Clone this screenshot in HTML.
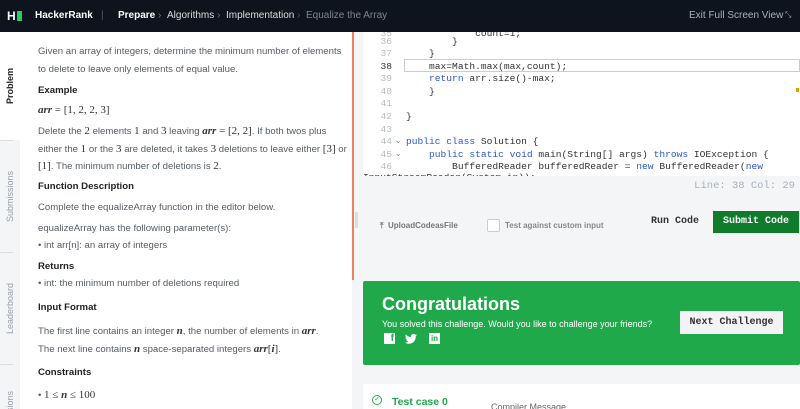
<!DOCTYPE html>
<html><head><style>
*{margin:0;padding:0;box-sizing:border-box}
html,body{width:800px;height:409px;overflow:hidden}
body{background:#f3f5f7;font-family:"Liberation Sans",sans-serif;position:relative}
.top{position:absolute;left:0;top:0;width:800px;height:32px;background:#0e141e;color:#fff;font-size:10px}
.top span{position:absolute;top:10px}
.side{position:absolute;left:0;top:32px;width:20px;height:377px;background:#f3f5f7}
.tab{position:absolute;left:0;width:20px;font-size:9px;color:#9aa0a8;writing-mode:vertical-rl;transform:rotate(180deg);display:flex;align-items:center;justify-content:center}
.left{position:absolute;left:20px;top:32px;width:332px;height:377px;background:#fff;color:#555c66;font-size:9.6px}
.left p{position:absolute;left:18px;white-space:nowrap}
.left b{color:#222;font-weight:bold}
.m{font-family:"Liberation Serif",serif;font-size:11px;color:#333}
.mi{font-family:"Liberation Serif",serif;font-style:italic;font-weight:bold;font-size:11px;color:#333}
.ed{position:absolute;left:363px;top:32px;width:437px;height:166px;background:#fff;font-family:"Liberation Mono",monospace;font-size:9.6px;overflow:hidden}
.ln{position:absolute;left:0;width:29px;text-align:right;color:#b6bcc4}
.cv{position:absolute;left:32px;color:#888;font-size:8px}
.cd{position:absolute;left:43px;white-space:pre;color:#333}
.kw{color:#2b57d6}
</style></head><body>
<div class="top">
<div style="position:absolute;left:7px;top:9px;font-weight:bold;font-size:12px">H<span style="position:static;display:inline-block;width:5px;height:10px;background:#2ec866;margin-left:1px;vertical-align:-1px"></span></div>
<span style="left:35px;font-weight:bold">HackerRank</span>
<span style="left:101px;color:#555">|</span>
<span style="left:118px;font-weight:bold">Prepare</span>
<span style="left:158px;color:#777">›</span>
<span style="left:167px;color:#ddd">Algorithms</span>
<span style="left:217px;color:#777">›</span>
<span style="left:226px;color:#ddd">Implementation</span>
<span style="left:297px;color:#555">›</span>
<span style="left:306px;color:#7b8592">Equalize the Array</span>
<span style="left:689px;color:#a8b0ba">Exit Full Screen View</span>
<span style="left:785px;color:#aaa;font-size:8px">⤡</span>
</div>
<div class="side">
<div class="tab" style="top:0;height:108px;background:#fff;color:#222;font-weight:bold">Problem</div>
<div style="position:absolute;top:108px;left:0;width:14px;height:1px;background:#ddd"></div>
<div class="tab" style="top:109px;height:110px">Submissions</div>
<div style="position:absolute;top:220px;left:0;width:14px;height:1px;background:#ddd"></div>
<div class="tab" style="top:221px;height:110px">Leaderboard</div>
<div style="position:absolute;top:332px;left:0;width:14px;height:1px;background:#ddd"></div>
<div class="tab" style="top:333px;height:100px">Discussions</div>
</div>
<div class="left">
<p style="top:14px">Given an array of integers, determine the minimum number of elements</p>
<p style="top:32px">to delete to leave only elements of equal value.</p>
<p style="top:53px"><b>Example</b></p>
<p style="top:72px"><span class="mi">arr</span> <span class="m">= [1, 2, 2, 3]</span></p>
<p style="top:93px">Delete the <span class="m">2</span> elements <span class="m">1</span> and <span class="m">3</span> leaving <span class="mi">arr</span> <span class="m">= [2, 2]</span>. If both twos plus</p>
<p style="top:111px">either the <span class="m">1</span> or the <span class="m">3</span> are deleted, it takes <span class="m">3</span> deletions to leave either <span class="m">[3]</span> or</p>
<p style="top:128px"><span class="m">[1]</span>. The minimum number of deletions is <span class="m">2</span>.</p>
<p style="top:149px"><b>Function Description</b></p>
<p style="top:170px">Complete the equalizeArray function in the editor below.</p>
<p style="top:191px">equalizeArray has the following parameter(s):</p>
<p style="top:208px">• int arr[n]: an array of integers</p>
<p style="top:229px"><b>Returns</b></p>
<p style="top:246px">• int: the minimum number of deletions required</p>
<p style="top:270px"><b>Input Format</b></p>
<p style="top:293px">The first line contains an integer <span class="mi">n</span>, the number of elements in <span class="mi">arr</span>.</p>
<p style="top:311px">The next line contains <span class="mi">n</span> space-separated integers <span class="mi">arr</span><span class="m">[</span><span class="mi">i</span><span class="m">]</span>.</p>
<p style="top:335px"><b>Constraints</b></p>
<p style="top:357px">• <span class="m">1 ≤ </span><span class="mi">n</span><span class="m"> ≤ 100</span></p>
</div>
<div style="position:absolute;left:352px;top:32px;width:2px;height:248px;background:#f0815a"></div>
<div style="position:absolute;left:355px;top:212px;width:3px;height:16px;background:#ddd"></div>
<div class="ed">
<div style="position:absolute;left:0;top:0;width:437px;height:144px">
<div style="position:absolute;left:41px;top:27px;width:396px;height:13px;border:1px solid #ccc"></div>
<div class="ln" style="top:-4px">35</div><div class="cd" style="top:-4px">            count=1;</div>
<div class="ln" style="top:4px">36</div><div class="cd" style="top:4px">        }</div>
<div class="ln" style="top:16px">37</div><div class="cd" style="top:16px">    }</div>
<div class="ln" style="top:29px;color:#333">38</div><div class="cd" style="top:29px">    max=Math.max(max,count);</div>
<div class="ln" style="top:41px">39</div><div class="cd" style="top:41px">    <span class="kw">return</span> arr.size()-max;</div>
<div class="ln" style="top:54px">40</div><div class="cd" style="top:54px">    }</div>
<div class="ln" style="top:66px">41</div>
<div class="ln" style="top:79px">42</div><div class="cd" style="top:79px">}</div>
<div class="ln" style="top:92px">43</div>
<div class="ln" style="top:104px">44</div><div class="cv" style="top:104px">⌄</div><div class="cd" style="top:104px"><span class="kw">public class</span> Solution {</div>
<div class="ln" style="top:117px">45</div><div class="cv" style="top:117px">⌄</div><div class="cd" style="top:117px">    <span class="kw">public static void</span> main(String[] args) <span class="kw">throws</span> IOException {</div>
<div class="ln" style="top:129px">46</div><div class="cd" style="top:129px">        BufferedReader bufferedReader = <span class="kw">new</span> BufferedReader(<span class="kw">new</span></div>
<div class="cd" style="top:140px;left:0">InputStreamReader(System.in));</div>
</div>
<div style="position:absolute;left:0;top:144px;width:437px;height:22px;background:#f3f5f7;color:#aab0b8;font-size:10.5px;text-align:right;padding:4px 5px 0 0">Line: 38 Col: 29</div>
<div style="position:absolute;left:433px;top:56px;width:3px;height:4px;background:#e0a000"></div>
</div>
<div style="position:absolute;left:380px;top:221px;font-size:8px;color:#777;font-weight:bold">⤒ &nbsp;UploadCodeasFile</div>
<div style="position:absolute;left:487px;top:219px;width:13px;height:13px;border:1px solid #ccc;border-radius:2px;background:#fff"></div>
<div style="position:absolute;left:505px;top:221px;font-size:8px;color:#888;font-weight:bold">Test against custom input</div>
<div style="position:absolute;left:651px;top:216px;font-family:'Liberation Mono',monospace;font-weight:bold;font-size:10px;color:#333">Run Code</div>
<div style="position:absolute;left:713px;top:211px;width:86px;height:22px;background:#0f7c2b;color:#fff;font-family:'Liberation Mono',monospace;font-weight:bold;font-size:10px;text-align:center;line-height:22px">Submit Code</div>
<div style="position:absolute;left:363px;top:281px;width:437px;height:84px;background:#20a94b;border-radius:2px;color:#fff">
<div style="position:absolute;left:19px;top:13px;font-size:18px;font-weight:bold">Congratulations</div>
<div style="position:absolute;left:19px;top:38px;font-size:9px">You solved this challenge. Would you like to challenge your friends?</div>
<div style="position:absolute;left:21px;top:52px;width:11px;height:11px;background:#fff;color:#20a94b;text-align:right;font-size:10px;font-weight:bold;line-height:12px;padding-right:1px">f</div>
<svg style="position:absolute;left:42px;top:53px" width="12" height="10" viewBox="0 0 24 20"><path fill="#fff" d="M24 2.4a9.8 9.8 0 0 1-2.8.8A4.9 4.9 0 0 0 23.3.4a9.9 9.9 0 0 1-3.1 1.2A4.9 4.9 0 0 0 11.8 6 14 14 0 0 1 1.7.9a4.9 4.9 0 0 0 1.5 6.6A4.9 4.9 0 0 1 1 6.9a4.9 4.9 0 0 0 3.9 4.8 4.9 4.9 0 0 1-2.2.1 4.9 4.9 0 0 0 4.6 3.4A9.9 9.9 0 0 1 0 17.2 14 14 0 0 0 7.5 19.4c9.1 0 14-7.5 14-14v-.6A10 10 0 0 0 24 2.4z"/></svg>
<div style="position:absolute;left:66px;top:52px;width:11px;height:11px;background:#fff;color:#20a94b;font-size:8px;font-weight:bold;line-height:11px;text-align:center">in</div>
<div style="position:absolute;left:317px;top:30px;width:103px;height:23px;background:#f3f3f5;color:#333;font-family:'Liberation Mono',monospace;font-weight:bold;font-size:10px;text-align:center;line-height:23px">Next Challenge</div>
</div>
<div style="position:absolute;left:363px;top:384px;width:437px;height:25px;background:#fff">
<div style="position:absolute;left:9px;top:11px;width:10px;height:10px;border:1px solid #20a94b;border-radius:50%;color:#20a94b;font-size:7px;line-height:8px;text-align:center">✓</div>
<div style="position:absolute;left:29px;top:12px;font-size:10.5px;color:#20a94b;font-weight:bold">Test case 0</div>
<div style="position:absolute;left:128px;top:18px;font-size:9px;color:#666">Compiler Message</div>
</div>
</body></html>
